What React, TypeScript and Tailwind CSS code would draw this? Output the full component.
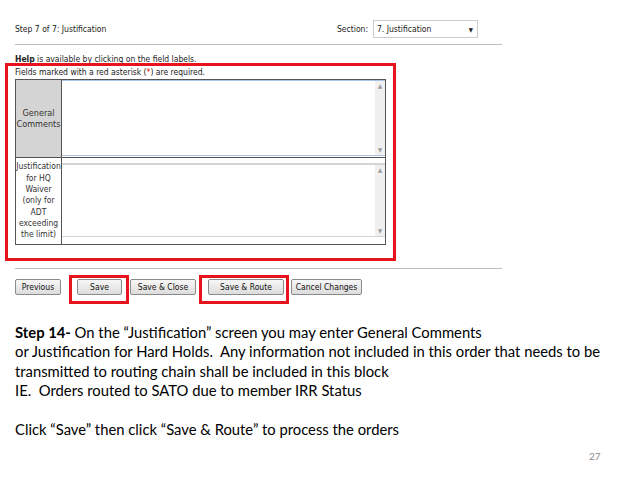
import React from 'react';

const ui = { fontFamily: '"DejaVu Sans Condensed", "Liberation Sans", sans-serif' };
const slide = { fontFamily: 'Lato, "Liberation Sans", sans-serif' };

const Scrollbar: React.FC = () => (
  <div className="w-[10px] flex flex-col justify-between items-center bg-[#f0f0f0] py-[2px] text-[6px] leading-none text-[#999]">
    <span>▲</span>
    <span>▼</span>
  </div>
);

const Btn: React.FC<{ label: string; className: string }> = ({ label, className }) => (
  <button
    className={`${className} h-[16px] shrink-0 border border-[#8a8a8a] rounded-[2px] bg-gradient-to-b from-[#f7f7f7] to-[#dcdcdc] text-[8.5px] text-[#111] leading-none`}
  >
    {label}
  </button>
);

const App: React.FC = () => {
  return (
    <div className="relative w-[638px] h-[478px] bg-white overflow-hidden" style={ui}>
      <div className="w-[487px] ml-[15px]">
        <div className="flex items-center justify-between pt-[20px] pr-[24px] h-[38px]">
          <span className="text-[8.5px] text-[#222]">Step 7 of 7: Justification</span>
          <div className="flex items-center gap-[5px]">
            <span className="text-[8.5px] text-[#222]">Section:</span>
            <div className="w-[105px] h-[18px] border border-[#ccc] flex items-center justify-between pl-[3px] pr-[4px]">
              <span className="text-[8.5px] text-[#222]">7. Justification</span>
              <span className="text-[6px] text-[#222]">▼</span>
            </div>
          </div>
        </div>
        <div className="mt-[6px] h-[1px] bg-[#bdbdbd]" />

        <div className="mt-[8px] text-[8.5px] leading-[13px] text-[#222]">
          <div>
            <span className="font-bold underline">Help</span> is available by clicking on the field labels.
          </div>
          <div>
            Fields marked with a red asterisk (<span className="text-[#e00]">*</span>) are required.
          </div>
        </div>

        <div className="w-[371px] border border-[#555]">
          <div className="flex h-[78px] border-b border-[#555]">
            <div className="w-[46px] bg-[#d4d4d4] border-r border-[#555] flex items-center justify-center text-center text-[9px] leading-[11px] text-[#333]">
              General<br />Comments
            </div>
            <div className="flex-1 flex border-t border-b border-[#a8c6e4] mb-[1px]">
              <div className="flex-1" />
              <Scrollbar />
            </div>
          </div>
          <div className="flex h-[86px]">
            <div className="w-[46px] border-r border-[#555] flex items-center justify-center text-center text-[8.5px] leading-[11.3px] text-[#333]">
              Justification<br />for HQ<br />Waiver<br />(only for<br />ADT<br />exceeding<br />the limit)
            </div>
            <div className="flex-1 flex border-t-2 border-b border-[#d4d4d4] mt-[5px] mb-[7px]">
              <div className="flex-1" />
              <Scrollbar />
            </div>
          </div>
        </div>

        <div className="mt-[23px] h-[1px] bg-[#bdbdbd]" />

        <div className="mt-[10px] flex items-start h-[16px]">
          <Btn label="Previous" className="w-[46px]" />
          <Btn label="Save" className="ml-[16px] w-[45px]" />
          <Btn label="Save & Close" className="ml-[8px] w-[66px]" />
          <Btn label="Save & Route" className="ml-[12px] w-[76px]" />
          <Btn label="Cancel Changes" className="ml-[7px] w-[71px]" />
        </div>
      </div>

      <div className="absolute left-[5px] top-[63px] w-[391px] h-[198px] border-[3px] border-[#e8141b]" />
      <div className="absolute left-[69px] top-[275px] w-[60px] h-[29px] border-[3px] border-[#e8141b]" />
      <div className="absolute left-[199px] top-[275px] w-[90px] h-[29px] border-[3px] border-[#e8141b]" />

      <div className="ml-[15px] mt-[28px] text-[14.8px] leading-[19.4px] text-black" style={slide}>
        <p><span className="font-bold">Step 14-</span> On the “Justification” screen you may enter General Comments</p>
        <p>or Justification for Hard Holds.&nbsp; Any information not included in this order that needs to be</p>
        <p>transmitted to routing chain shall be included in this block</p>
        <p>IE.&nbsp; Orders routed to SATO due to member IRR Status</p>
        <p>&nbsp;</p>
        <p>Click “Save” then click “Save &amp; Route” to process the orders</p>
      </div>
      <div className="absolute left-[589px] top-[449px] text-[10px] text-[#8c8c8c]" style={slide}>27</div>
    </div>
  );
};

export default App;
